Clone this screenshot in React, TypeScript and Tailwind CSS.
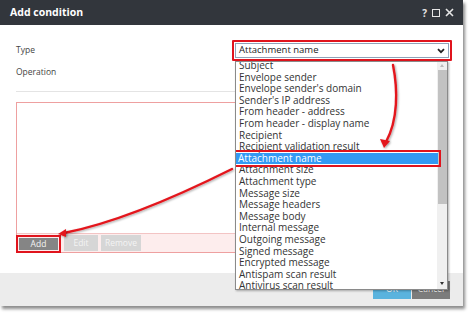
import React from "react";

const ITEMS = [
  "Subject",
  "Envelope sender",
  "Envelope sender's domain",
  "Sender's IP address",
  "From header - address",
  "From header - display name",
  "Recipient",
  "Recipient validation result",
  "Attachment name",
  "Attachment size",
  "Attachment type",
  "Message size",
  "Message headers",
  "Message body",
  "Internal message",
  "Outgoing message",
  "Signed message",
  "Encrypted message",
  "Antispam scan result",
  "Antivirus scan result",
];

const FONT = { fontFamily: '"Open Sans", "Noto Sans", sans-serif' };

function Chevron() {
  return (
    <svg width="8" height="6" viewBox="0 0 8 6">
      <path d="M1 1.2 L4 4.2 L7 1.2" fill="none" stroke="#222" strokeWidth="1.8" />
    </svg>
  );
}

function Annotations() {
  return (
    <svg className="pointer-events-none absolute left-0 top-0" width="474" height="316" viewBox="0 0 474 316">
      <defs>
        <filter id="sh" x="-20%" y="-20%" width="140%" height="140%">
          <feDropShadow dx="1" dy="1" stdDeviation="0.8" floodColor="#000" floodOpacity="0.35" />
        </filter>
      </defs>
      <g filter="url(#sh)" fill="none" stroke="#e3161f" strokeWidth="2.4" strokeLinecap="round">
        <path d="M393 65 C 398 90, 398 120, 386 142" />
        <path d="M232 169 C 180 195, 120 222, 64 233" />
      </g>
      <g filter="url(#sh)" fill="#e3161f">
        <path d="M384 148 L380 139 L390 141 Z" />
        <path d="M58 234 L66 229 L66 237 Z" />
      </g>
    </svg>
  );
}

export default function App() {
  return (
    <div className="relative h-[316px] w-[474px] overflow-hidden bg-white text-[#333]" style={FONT}>
      <div className="flex h-[306px] w-[463px] flex-col shadow-[2px_3px_3px_rgba(0,0,0,0.45)]">
        {/* title */}
        <div className="flex h-[25px] shrink-0 items-center justify-between bg-[#32363c] pl-[10px] pr-[9px]">
          <span className="text-[10.5px] font-bold text-white">Add condition</span>
          <div className="flex items-center gap-[5px] text-[#e6e6e6]">
            <span className="text-[10px] font-bold leading-none">?</span>
            <span className="h-[8px] w-[8px] border-[1.5px] border-[#e6e6e6]" />
            <svg width="9" height="9" viewBox="0 0 9 9">
              <path d="M1 1 L8 8 M8 1 L1 8" stroke="#e6e6e6" strokeWidth="1.6" />
            </svg>
          </div>
        </div>

        {/* body */}
        <div className="flex flex-1 flex-col bg-white px-4">
          <div className="mt-[15px] flex h-[21px] items-center justify-between">
            <span className="text-[8.5px] text-[#444]">Type</span>
            <div className="-mr-[5px] flex h-[21px] w-[220px] items-center rounded-[1px] border-2 border-[#e0141d] p-px">
              <div className="flex h-full w-full items-center justify-between border border-[#8fa2b8] bg-white pl-[3px] pr-[3px]">
                <span className="text-[9.5px] text-[#222]">Attachment name</span>
                <Chevron />
              </div>
            </div>
          </div>
          <div className="flex h-[22px] items-center">
            <span className="text-[8.5px] text-[#444]">Operation</span>
          </div>
          <div className="mt-[8px] h-px w-[431px] bg-[#e4e4e4]" />
          <div className="mt-[10px] flex w-[431px] flex-col border border-[#eea0a0]">
            <div className="h-[130px] bg-white" />
            <div className="flex h-[19px] items-start gap-[3px] border-t border-[#f3c4c4] bg-[#fdeded] pt-px">
              <div className="-ml-px flex h-[18px] w-[45px] items-center justify-center border-2 border-[#e0141d] p-px">
                <div className="flex h-full w-full items-center justify-center bg-[#858585] text-[8.5px] text-[#f4f4f4]">Add</div>
              </div>
              <div className="flex h-[16px] w-[34px] items-center justify-center bg-[#d6d6d6] text-[8.5px] text-[#f4f4f4]">Edit</div>
              <div className="flex h-[16px] w-[40px] items-center justify-center bg-[#d6d6d6] text-[8.5px] text-[#f4f4f4]">Remove</div>
            </div>
          </div>
        </div>

        {/* footer */}
        <div className="flex h-[33px] shrink-0 items-center justify-end gap-px bg-[#ececec] pr-[13px]">
          <div className="flex h-[18px] w-[38px] items-center justify-center bg-[#5ab3de] text-[8.5px] text-white">OK</div>
          <div className="flex h-[18px] w-[38px] items-center justify-center bg-[#7c7c7c] text-[8.5px] text-white">Cancel</div>
        </div>
      </div>

      {/* open dropdown list */}
      <div className="absolute left-[235px] top-[61px] flex h-[229px] w-[213px] overflow-hidden border border-[#8a8a8a] bg-white shadow-[1px_1px_2px_rgba(0,0,0,0.3)]">
        <div className="-mt-[2px] flex flex-1 flex-col">
          {ITEMS.map((it) =>
            it === "Attachment name" ? (
              <div key={it} className="relative h-[11.6px] shrink-0">
                <div className="absolute -left-[3px] -top-[3px] h-[17px] w-[208px] border-2 border-[#e0141d] p-px">
                  <div className="h-full w-full bg-[#3399f3] pl-[2px] text-[10px] leading-[11px] text-white">{it}</div>
                </div>
              </div>
            ) : (
              <div key={it} className="h-[11.6px] shrink-0 pl-[3px] text-[10px] leading-[11.6px]">
                {it}
              </div>
            )
          )}
        </div>
        <div className="flex w-[10px] shrink-0 flex-col items-center bg-[#f0f0f0]">
          <div className="mt-[2px] h-0 w-0 border-x-[2.5px] border-b-[3px] border-x-transparent border-b-[#bbb]" />
          <div className="mt-[3px] h-[134px] w-[9px] bg-[#c2c2c2]" />
          <div className="mt-auto mb-[4px] h-0 w-0 border-x-[2.5px] border-t-[3px] border-x-transparent border-t-[#333]" />
        </div>
      </div>

      <Annotations />
    </div>
  );
}
